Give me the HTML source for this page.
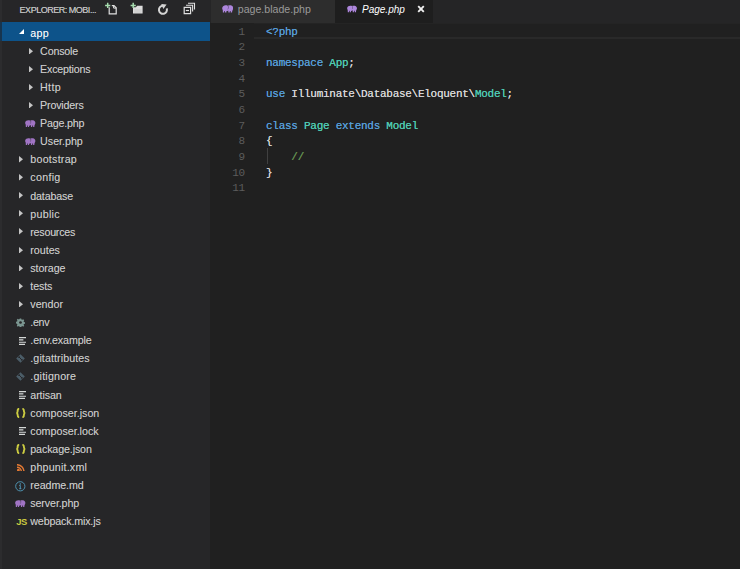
<!DOCTYPE html><html><head><meta charset="utf-8"><style>
html,body{margin:0;padding:0;}
body{width:740px;height:569px;overflow:hidden;position:relative;background:#202020;font-family:"Liberation Sans",sans-serif;}
.a{position:absolute;white-space:pre;}
.sb{position:absolute;left:0;top:0;width:210px;height:569px;background:#262628;}
.lbl{position:absolute;white-space:pre;text-shadow:0 0 0.6px rgba(220,220,220,0.35);font-size:10.7px;letter-spacing:-0.1px;line-height:18.09px;color:#cccccc;}
.code{position:absolute;white-space:pre;text-shadow:0 0 0.5px;font-family:"Liberation Mono",monospace;font-size:11px;letter-spacing:-0.27px;line-height:15.64px;color:#d4d4d4;}
.ln{position:absolute;white-space:pre;font-family:"Liberation Mono",monospace;font-size:11px;letter-spacing:-0.27px;line-height:15.64px;color:#5c5c5c;text-align:right;width:60px;}
.k{color:#569cd6} .t{color:#4ec9b0} .c{color:#608b4e}
</style></head><body>
<div class="sb"></div>

<div class="a" style="left:19.6px;top:4.08px;font-size:9.0px;line-height:12px;letter-spacing:-0.48px;color:#bbbbbb;text-shadow:0 0 0.5px">EXPLORER: MOBI...</div>
<svg class="a" style="left:100px;top:0px" width="100" height="20" viewBox="100 0 100 20">
<path d="M109.2 7.2V13.8H116.2V7.8L114 5.6H111.8" fill="none" stroke="#e0e0e0" stroke-width="1.2"/>
<path d="M113.6 5.6V8.1H116.2" fill="none" stroke="#e0e0e0" stroke-width="1"/>
<path d="M107.7 2.8V8M105.1 5.4H110.3" stroke="#a6dcae" stroke-width="1.5" fill="none"/>
<path d="M133 7.2H135.8L137.2 5.8H142.6V13.6H133Z" fill="#dcdcdc"/>
<path d="M134.2 10H141.6M134.2 12H141.6" stroke="#b8b8b8" stroke-width="0.6"/>
<path d="M133.2 2.8V8M130.6 5.4H135.8" stroke="#a6dcae" stroke-width="1.5" fill="none"/>
<path d="M162.9 5.8A4 4 0 1 0 166.7 8.4" fill="none" stroke="#d4d4d4" stroke-width="2"/>
<path d="M161.2 3.9L166.6 4.4L163.4 9Z" fill="#d4d4d4"/>
<path d="M184.2 7.4H190.6V13.6H184.2Z" fill="none" stroke="#e0e0e0" stroke-width="1.2"/>
<path d="M186 5.3H192.6V11.6" fill="none" stroke="#e0e0e0" stroke-width="1.1"/>
<path d="M188 3.3H194.5V9.5" fill="none" stroke="#e0e0e0" stroke-width="1.1"/>
<path d="M185.8 10.5H189" stroke="#e0e0e0" stroke-width="1.2"/>
</svg>
<div class="a" style="left:0;top:22.3px;width:210px;height:19.2px;background:#0d538a"></div>
<div class="lbl" style="left:30.30px;top:23.75px;color:#ffffff;letter-spacing:0.300px">app</div>
<svg class="a" style="left:19.40px;top:29.40px" width="5" height="5" viewBox="0 0 5 5"><path d="M5 0V5H0Z" fill="#ffffff"/></svg>
<div class="lbl" style="left:40.10px;top:41.84px;color:#cccccc;letter-spacing:-0.183px">Console</div>
<svg class="a" style="left:29.20px;top:47.54px" width="4" height="6.5" viewBox="0 0 4 6.5"><path d="M0 0L4 3.25L0 6.5Z" fill="#c5c5c5"/></svg>
<div class="lbl" style="left:40.10px;top:59.93px;color:#cccccc;letter-spacing:-0.200px">Exceptions</div>
<svg class="a" style="left:29.20px;top:65.63px" width="4" height="6.5" viewBox="0 0 4 6.5"><path d="M0 0L4 3.25L0 6.5Z" fill="#c5c5c5"/></svg>
<div class="lbl" style="left:40.10px;top:78.02px;color:#cccccc;letter-spacing:0.300px">Http</div>
<svg class="a" style="left:29.20px;top:83.72px" width="4" height="6.5" viewBox="0 0 4 6.5"><path d="M0 0L4 3.25L0 6.5Z" fill="#c5c5c5"/></svg>
<div class="lbl" style="left:40.10px;top:96.11px;color:#cccccc;letter-spacing:-0.175px">Providers</div>
<svg class="a" style="left:29.20px;top:101.81px" width="4" height="6.5" viewBox="0 0 4 6.5"><path d="M0 0L4 3.25L0 6.5Z" fill="#c5c5c5"/></svg>
<div class="lbl" style="left:40.10px;top:114.20px;color:#cccccc;letter-spacing:-0.200px">Page.php</div>
<svg style="position:absolute;left:25.000000000000004px;top:120.05000000000001px" width="10.6" height="7.2" viewBox="0 0 23 15"><path fill="#a074c4" d="M3 1.5C5 -0.2 9 0 11.5 1.2C13 0.2 17 -0.3 20 1.3C22.5 2.8 23 6 22 8.5C21.2 10.5 20.5 11 20.3 14.8L17.6 14.8L17.4 11.8L15.8 11.8L15.6 14.8L13 14.8L12.6 10.8C11.8 11.8 10 12 9 12L8.8 14.8L6.2 14.8L6 11.8L4.6 11.6L4.4 14.8L1.8 14.8L1.5 9.5C0 8 -0.5 4 3 1.5Z"/><path fill="#1e1e1e" opacity="0.55" d="M11.5 1.6C12.4 3.2 12.6 6.5 11 8.5C12.8 8.2 14 5.2 13.2 1.4Z"/></svg>
<div class="lbl" style="left:40.10px;top:132.29px;color:#cccccc;letter-spacing:-0.014px">User.php</div>
<svg style="position:absolute;left:25.000000000000004px;top:138.14px" width="10.6" height="7.2" viewBox="0 0 23 15"><path fill="#a074c4" d="M3 1.5C5 -0.2 9 0 11.5 1.2C13 0.2 17 -0.3 20 1.3C22.5 2.8 23 6 22 8.5C21.2 10.5 20.5 11 20.3 14.8L17.6 14.8L17.4 11.8L15.8 11.8L15.6 14.8L13 14.8L12.6 10.8C11.8 11.8 10 12 9 12L8.8 14.8L6.2 14.8L6 11.8L4.6 11.6L4.4 14.8L1.8 14.8L1.5 9.5C0 8 -0.5 4 3 1.5Z"/><path fill="#1e1e1e" opacity="0.55" d="M11.5 1.6C12.4 3.2 12.6 6.5 11 8.5C12.8 8.2 14 5.2 13.2 1.4Z"/></svg>
<div class="lbl" style="left:30.30px;top:150.38px;color:#cccccc;letter-spacing:0.238px">bootstrap</div>
<svg class="a" style="left:19.40px;top:156.08px" width="4" height="6.5" viewBox="0 0 4 6.5"><path d="M0 0L4 3.25L0 6.5Z" fill="#c5c5c5"/></svg>
<div class="lbl" style="left:30.30px;top:168.47px;color:#cccccc;letter-spacing:0.300px">config</div>
<svg class="a" style="left:19.40px;top:174.17px" width="4" height="6.5" viewBox="0 0 4 6.5"><path d="M0 0L4 3.25L0 6.5Z" fill="#c5c5c5"/></svg>
<div class="lbl" style="left:30.30px;top:186.56px;color:#cccccc;letter-spacing:-0.171px">database</div>
<svg class="a" style="left:19.40px;top:192.26px" width="4" height="6.5" viewBox="0 0 4 6.5"><path d="M0 0L4 3.25L0 6.5Z" fill="#c5c5c5"/></svg>
<div class="lbl" style="left:30.30px;top:204.65px;color:#cccccc;letter-spacing:0.280px">public</div>
<svg class="a" style="left:19.40px;top:210.35px" width="4" height="6.5" viewBox="0 0 4 6.5"><path d="M0 0L4 3.25L0 6.5Z" fill="#c5c5c5"/></svg>
<div class="lbl" style="left:30.30px;top:222.74px;color:#cccccc;letter-spacing:-0.238px">resources</div>
<svg class="a" style="left:19.40px;top:228.44px" width="4" height="6.5" viewBox="0 0 4 6.5"><path d="M0 0L4 3.25L0 6.5Z" fill="#c5c5c5"/></svg>
<div class="lbl" style="left:30.30px;top:240.83px;color:#cccccc;letter-spacing:-0.020px">routes</div>
<svg class="a" style="left:19.40px;top:246.53px" width="4" height="6.5" viewBox="0 0 4 6.5"><path d="M0 0L4 3.25L0 6.5Z" fill="#c5c5c5"/></svg>
<div class="lbl" style="left:30.30px;top:258.92px;color:#cccccc;letter-spacing:-0.083px">storage</div>
<svg class="a" style="left:19.40px;top:264.62px" width="4" height="6.5" viewBox="0 0 4 6.5"><path d="M0 0L4 3.25L0 6.5Z" fill="#c5c5c5"/></svg>
<div class="lbl" style="left:30.30px;top:277.01px;color:#cccccc;letter-spacing:-0.100px">tests</div>
<svg class="a" style="left:19.40px;top:282.71px" width="4" height="6.5" viewBox="0 0 4 6.5"><path d="M0 0L4 3.25L0 6.5Z" fill="#c5c5c5"/></svg>
<div class="lbl" style="left:30.30px;top:295.10px;color:#cccccc;letter-spacing:0.020px">vendor</div>
<svg class="a" style="left:19.40px;top:300.80px" width="4" height="6.5" viewBox="0 0 4 6.5"><path d="M0 0L4 3.25L0 6.5Z" fill="#c5c5c5"/></svg>
<div class="lbl" style="left:30.30px;top:313.19px;color:#cccccc;letter-spacing:-0.333px">.env</div>
<svg class="a" style="left:15.70px;top:318.14px" width="9" height="9" viewBox="0 0 22 22"><path fill="#7a9590" d="M9.2 1h3.6l.5 2.6 2 .9 2.3-1.5 2.5 2.5-1.5 2.2.9 2 2.6.6v3.6l-2.6.5-.9 2 1.5 2.3-2.5 2.5-2.3-1.5-2 .9-.5 2.6H9.2l-.5-2.6-2-.9-2.3 1.5-2.5-2.5 1.5-2.3-.9-2L0 12.8V9.2l2.6-.6.9-2L2 4.5 4.5 2l2.3 1.5 2-.9z"/><circle cx="11" cy="11" r="3.3" fill="#262628"/></svg>
<div class="lbl" style="left:30.30px;top:331.28px;color:#cccccc;letter-spacing:-0.127px">.env.example</div>
<svg class="a" style="left:18.60px;top:336.73px" width="7.4" height="8" viewBox="0 0 7.4 8"><path d="M0 0.6H7.2M0 2.9H4.4M0 5.2H7.4M0 7.4H6" stroke="#d4d7d6" stroke-width="1.1"/></svg>
<div class="lbl" style="left:30.30px;top:349.37px;color:#cccccc;letter-spacing:0.085px">.gitattributes</div>
<svg class="a" style="left:15.85px;top:354.32px" width="9" height="9" viewBox="0 0 10 10"><path d="M5 0.2L9.8 5L5 9.8L0.2 5Z" fill="#4b5d68"/><path d="M3.6 3.6L6.4 6.4" stroke="#262628" stroke-width="1.1"/><circle cx="3.5" cy="3.5" r="1" fill="#262628"/><circle cx="6.5" cy="6.5" r="1" fill="#262628"/></svg>
<div class="lbl" style="left:30.30px;top:367.46px;color:#cccccc;letter-spacing:0.200px">.gitignore</div>
<svg class="a" style="left:15.85px;top:372.41px" width="9" height="9" viewBox="0 0 10 10"><path d="M5 0.2L9.8 5L5 9.8L0.2 5Z" fill="#4b5d68"/><path d="M3.6 3.6L6.4 6.4" stroke="#262628" stroke-width="1.1"/><circle cx="3.5" cy="3.5" r="1" fill="#262628"/><circle cx="6.5" cy="6.5" r="1" fill="#262628"/></svg>
<div class="lbl" style="left:30.30px;top:385.55px;color:#cccccc;letter-spacing:-0.100px">artisan</div>
<svg class="a" style="left:18.60px;top:391.00px" width="7.4" height="8" viewBox="0 0 7.4 8"><path d="M0 0.6H7.2M0 2.9H4.4M0 5.2H7.4M0 7.4H6" stroke="#d4d7d6" stroke-width="1.1"/></svg>
<div class="lbl" style="left:30.30px;top:403.64px;color:#cccccc;letter-spacing:0.008px">composer.json</div>
<svg class="a" style="left:16.00px;top:408.09px" width="9.6" height="10" viewBox="0 0 9.6 10"><path d="M3.2 0.8C1.6 0.8 1.6 2 1.6 3.5C1.6 4.6 1.2 5 0.3 5C1.2 5 1.6 5.4 1.6 6.5C1.6 8 1.6 9.2 3.2 9.2" fill="none" stroke="#cbcb41" stroke-width="1.9"/><path d="M6.4 0.8C8 0.8 8 2 8 3.5C8 4.6 8.4 5 9.3 5C8.4 5 8 5.4 8 6.5C8 8 8 9.2 6.4 9.2" fill="none" stroke="#cbcb41" stroke-width="1.9"/></svg>
<div class="lbl" style="left:30.30px;top:421.73px;color:#cccccc;letter-spacing:0.000px">composer.lock</div>
<svg class="a" style="left:18.60px;top:427.18px" width="7.4" height="8" viewBox="0 0 7.4 8"><path d="M0 0.6H7.2M0 2.9H4.4M0 5.2H7.4M0 7.4H6" stroke="#d4d7d6" stroke-width="1.1"/></svg>
<div class="lbl" style="left:30.30px;top:439.82px;color:#cccccc;letter-spacing:-0.127px">package.json</div>
<svg class="a" style="left:16.00px;top:444.27px" width="9.6" height="10" viewBox="0 0 9.6 10"><path d="M3.2 0.8C1.6 0.8 1.6 2 1.6 3.5C1.6 4.6 1.2 5 0.3 5C1.2 5 1.6 5.4 1.6 6.5C1.6 8 1.6 9.2 3.2 9.2" fill="none" stroke="#cbcb41" stroke-width="1.9"/><path d="M6.4 0.8C8 0.8 8 2 8 3.5C8 4.6 8.4 5 9.3 5C8.4 5 8 5.4 8 6.5C8 8 8 9.2 6.4 9.2" fill="none" stroke="#cbcb41" stroke-width="1.9"/></svg>
<div class="lbl" style="left:30.30px;top:457.91px;color:#cccccc;letter-spacing:0.190px">phpunit.xml</div>
<svg class="a" style="left:16.60px;top:463.56px" width="8" height="7.6" viewBox="0 0 8 7.6"><circle cx="1.4" cy="6.2" r="1.4" fill="#e37933"/><path d="M0 3.3A4.3 4.3 0 0 1 4.3 7.6" fill="none" stroke="#e37933" stroke-width="1.5"/><path d="M0 0.7A7 7 0 0 1 7 7.6" fill="none" stroke="#e37933" stroke-width="1.5"/></svg>
<div class="lbl" style="left:30.30px;top:476.00px;color:#cccccc;letter-spacing:-0.075px">readme.md</div>
<svg class="a" style="left:15.30px;top:480.95px" width="10.6" height="10.6" viewBox="0 0 22 22"><circle cx="11" cy="11" r="9.6" fill="none" stroke="#519aba" stroke-width="1.9"/><circle cx="11" cy="6.4" r="1.5" fill="#519aba"/><path d="M11 9.2V16.2M8.8 16H13.2M8.8 9.4H11" stroke="#519aba" stroke-width="2"/></svg>
<div class="lbl" style="left:30.30px;top:494.09px;color:#cccccc;letter-spacing:-0.111px">server.php</div>
<svg style="position:absolute;left:15.200000000000001px;top:499.93999999999994px" width="10.6" height="7.2" viewBox="0 0 23 15"><path fill="#a074c4" d="M3 1.5C5 -0.2 9 0 11.5 1.2C13 0.2 17 -0.3 20 1.3C22.5 2.8 23 6 22 8.5C21.2 10.5 20.5 11 20.3 14.8L17.6 14.8L17.4 11.8L15.8 11.8L15.6 14.8L13 14.8L12.6 10.8C11.8 11.8 10 12 9 12L8.8 14.8L6.2 14.8L6 11.8L4.6 11.6L4.4 14.8L1.8 14.8L1.5 9.5C0 8 -0.5 4 3 1.5Z"/><path fill="#1e1e1e" opacity="0.55" d="M11.5 1.6C12.4 3.2 12.6 6.5 11 8.5C12.8 8.2 14 5.2 13.2 1.4Z"/></svg>
<div class="lbl" style="left:30.30px;top:512.18px;color:#cccccc;letter-spacing:-0.154px">webpack.mix.js</div>
<div class="a" style="left:16.2px;top:516.03px;font-family:'Liberation Sans';font-weight:bold;font-size:9.4px;line-height:12px;color:#cbcb41;letter-spacing:-0.3px">JS</div>
<div class="a" style="left:210px;top:0;width:530px;height:22.5px;background:#252526"></div>
<div class="a" style="left:211px;top:0;width:124px;height:22.5px;background:#2d2d2d"></div>
<div class="a" style="left:335px;top:0;width:97.5px;height:22.5px;background:#1e1e1e"></div>
<svg style="position:absolute;left:221.6px;top:5.2px" width="11.4" height="7.8" viewBox="0 0 23 15"><path fill="#ad86dc" d="M3 1.5C5 -0.2 9 0 11.5 1.2C13 0.2 17 -0.3 20 1.3C22.5 2.8 23 6 22 8.5C21.2 10.5 20.5 11 20.3 14.8L17.6 14.8L17.4 11.8L15.8 11.8L15.6 14.8L13 14.8L12.6 10.8C11.8 11.8 10 12 9 12L8.8 14.8L6.2 14.8L6 11.8L4.6 11.6L4.4 14.8L1.8 14.8L1.5 9.5C0 8 -0.5 4 3 1.5Z"/><path fill="#1e1e1e" opacity="0.55" d="M11.5 1.6C12.4 3.2 12.6 6.5 11 8.5C12.8 8.2 14 5.2 13.2 1.4Z"/></svg>
<div class="a" style="left:237.8px;top:2.23px;font-size:10.6px;line-height:14px;color:#9a9a9a">page.blade.php</div>
<svg style="position:absolute;left:346.7px;top:5.2px" width="10.2" height="7.8" viewBox="0 0 23 15"><path fill="#ad86dc" d="M3 1.5C5 -0.2 9 0 11.5 1.2C13 0.2 17 -0.3 20 1.3C22.5 2.8 23 6 22 8.5C21.2 10.5 20.5 11 20.3 14.8L17.6 14.8L17.4 11.8L15.8 11.8L15.6 14.8L13 14.8L12.6 10.8C11.8 11.8 10 12 9 12L8.8 14.8L6.2 14.8L6 11.8L4.6 11.6L4.4 14.8L1.8 14.8L1.5 9.5C0 8 -0.5 4 3 1.5Z"/><path fill="#1e1e1e" opacity="0.55" d="M11.5 1.6C12.4 3.2 12.6 6.5 11 8.5C12.8 8.2 14 5.2 13.2 1.4Z"/></svg>
<div class="a" style="left:362px;top:2.54px;font-size:10px;line-height:14px;color:#ffffff;font-style:italic">Page.php</div>
<svg class="a" style="left:417px;top:5px" width="8" height="8" viewBox="0 0 8 8"><path d="M1.2 1.2L6.8 6.8M6.8 1.2L1.2 6.8" stroke="#f0f0f0" stroke-width="1.9"/></svg>
<div class="a" style="left:254px;top:23.0px;width:486px;height:13.04px;border-top:1px solid #242424;border-bottom:2px solid #292929"></div>
<div class="ln" style="left:184.8px;top:24.85px">1</div>
<div class="code" style="left:266px;top:24.85px"><span class="k">&lt;?php</span></div>
<div class="ln" style="left:184.8px;top:40.49px">2</div>
<div class="ln" style="left:184.8px;top:56.13px">3</div>
<div class="code" style="left:266px;top:56.13px"><span class="k">namespace</span> <span class="t">App</span>;</div>
<div class="ln" style="left:184.8px;top:71.77px">4</div>
<div class="ln" style="left:184.8px;top:87.41px">5</div>
<div class="code" style="left:266px;top:87.41px"><span class="k">use</span> Illuminate\Database\Eloquent\<span class="t">Model</span>;</div>
<div class="ln" style="left:184.8px;top:103.05px">6</div>
<div class="ln" style="left:184.8px;top:118.69px">7</div>
<div class="code" style="left:266px;top:118.69px"><span class="k">class</span> <span class="t">Page</span> <span class="k">extends</span> <span class="t">Model</span></div>
<div class="ln" style="left:184.8px;top:134.33px">8</div>
<div class="code" style="left:266px;top:134.33px">{</div>
<div class="ln" style="left:184.8px;top:149.97px">9</div>
<div class="code" style="left:266px;top:149.97px">    <span class="c">//</span></div>
<div class="ln" style="left:184.8px;top:165.61px">10</div>
<div class="code" style="left:266px;top:165.61px">}</div>
<div class="ln" style="left:184.8px;top:181.25px">11</div>
<div class="a" style="left:266.5px;top:148.12px;width:1px;height:15.64px;background:#404040"></div>
<div class="a" style="left:0;top:0;width:1.5px;height:569px;background:#2c2c2e"></div>
<div class="a" style="left:0;top:22.3px;width:1.5px;height:19.2px;background:#17354f"></div>
</body></html>
